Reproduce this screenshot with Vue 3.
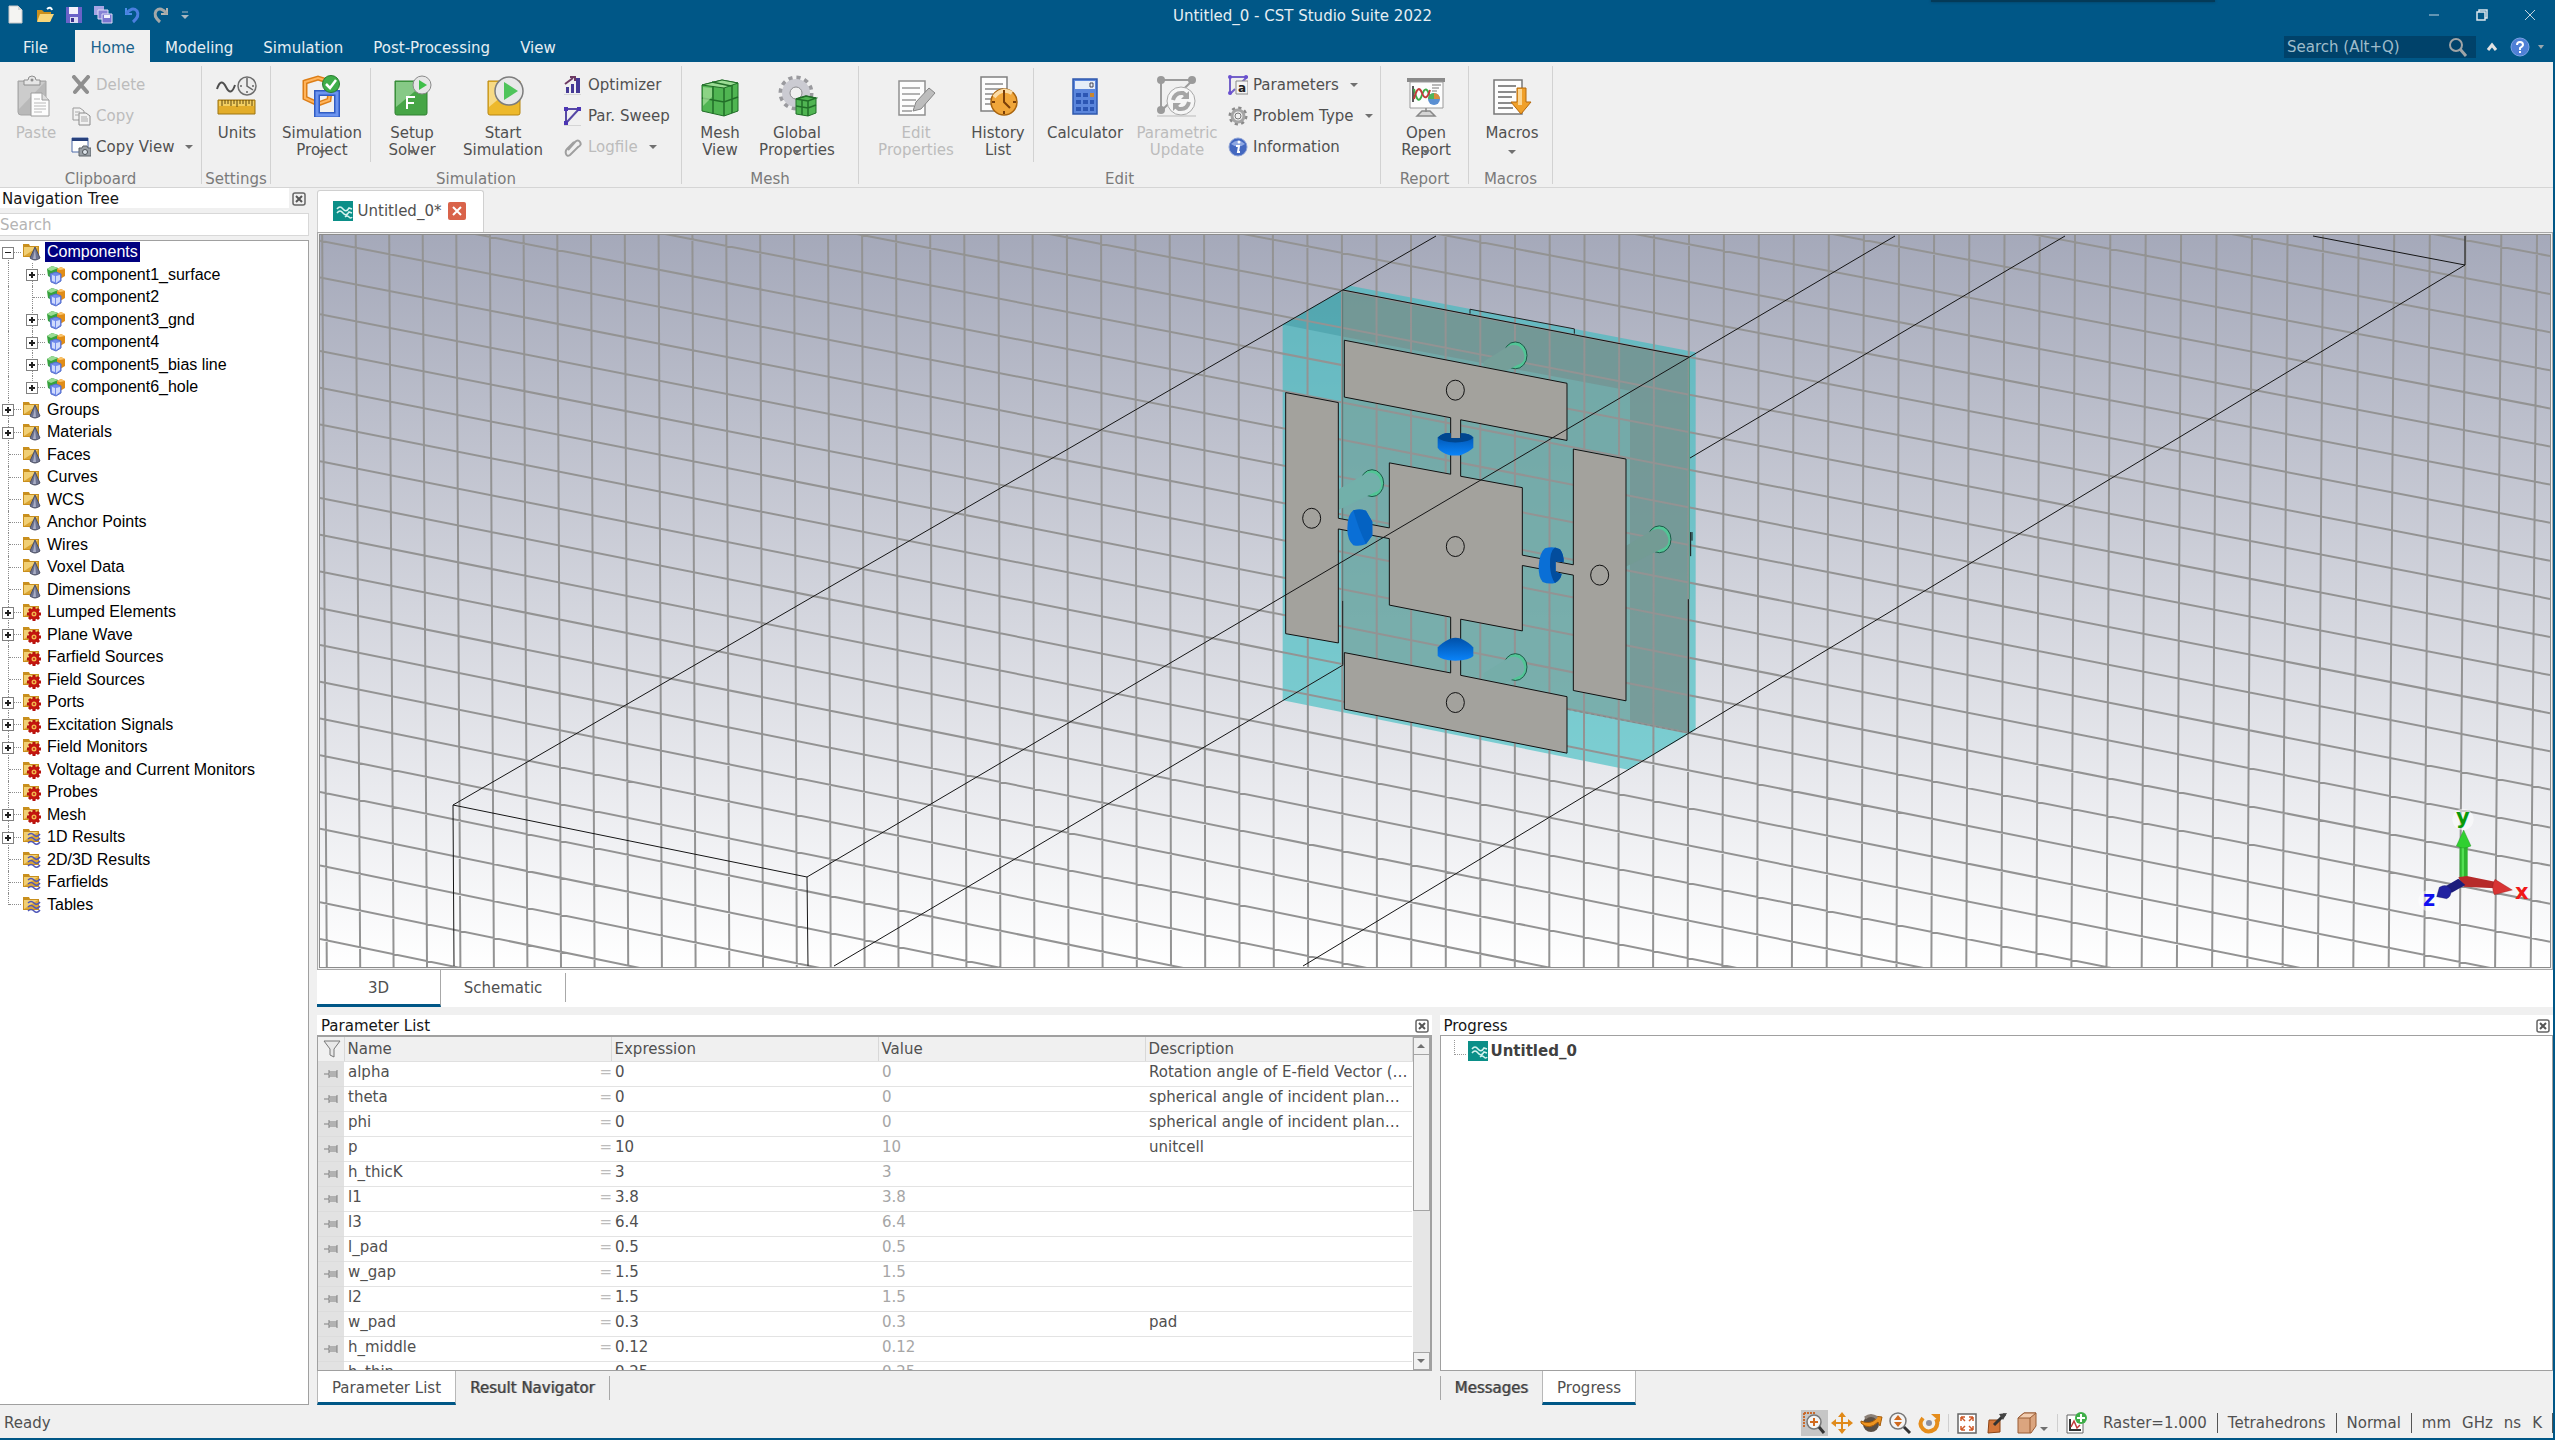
<script setup>
import { ref } from 'vue'

const art = {
  doc: '<path d="M3 1h9l4 4v13H3z" fill="#f4f4f2" stroke="#c9c9c9"/><path d="M12 1v4h4" fill="#d5d5d5"/>',
  open: '<path d="M2 5h5l2 2h7v9H2z" fill="#c98f1d"/><path d="M5 9h14l-4 8H2z" fill="#f7d67a"/><path d="M12 4q4-3 5 1" fill="none" stroke="#fff" stroke-width="2"/>',
  save: '<path d="M2 2h16v16H2z" fill="#6a62c8"/><path d="M5 2h9v7H5z" fill="#f2f2fb"/><path d="M6 12h8v6H6z" fill="#dcdcf4"/><path d="M7 13h3v4H7z" fill="#3c3590"/>',
  saveall: '<path d="M1 1h10v9H1z" fill="#a6a4e4"/><path d="M5 5h10v9H5z" fill="#8783d6" stroke="#dcdcf6"/><path d="M9 9h10v9H9z" fill="#7a75d0" stroke="#dcdcf6"/><path d="M11 10h6v3h-6z" fill="#f2f2fb"/>',
  undo: '<path d="M4 3v6h6" fill="none" stroke="#4b8fe8" stroke-width="2"/><path d="M4 9q6-8 11-3q3 5-4 11" fill="none" stroke="#4b7fe0" stroke-width="3"/>',
  redo: '<path d="M16 3v6h-6" fill="none" stroke="#b4b4ae" stroke-width="2"/><path d="M16 9q-6-8-11-3q-3 5 4 11" fill="none" stroke="#a4a8a8" stroke-width="3"/>',
  paste: '<path d="M3 6h28v31q0 3-3 3H6q-3 0-3-3z" fill="#b9b9b9" stroke="#a5a5a5"/><path d="M4 7h26L4 34z" fill="#cccccc"/><path d="M9 5h4q0-4 4-4t4 4h4v5H9z" fill="#e6e6e6" stroke="#8e8e8e"/><circle cx="17" cy="5" r="1.500" fill="#8e8e8e"/><path d="M16 18h11l7 7v16H16z" fill="#fdfdfd" stroke="#9c9c9c"/><path d="M27 18v7h7" fill="#ddd" stroke="#9c9c9c"/><path d="M19 24h6M19 28h12M19 31h12M19 34h12M19 37h8" stroke="#b9b9b9"/>',
  del: '<path d="M3 2l13 15M17 2L4 17" stroke="#8f8f8f" stroke-width="4" stroke-linecap="round"/>',
  copy: '<path d="M2 2h7l4 3v9H2z" fill="#f2f2f2" stroke="#9a9a9a"/><path d="M8 7h7l4 3v9H8z" fill="#f2f2f2" stroke="#8a8a8a"/><path d="M10 11h6M10 13h7M10 15h7M4 6h5M4 9h4" stroke="#aaa"/>',
  copyview: '<path d="M1 1h16v14H1z" fill="#fff" stroke="#4c6aa8"/><path d="M1 1h16v3H1z" fill="#27407c"/><path d="M8 11h3l1-2h4l1 2h3v8H8z" fill="#9aa0a6" stroke="#5d6268"/><circle cx="14" cy="15" r="2.500" fill="#dfe6ec" stroke="#4d5257"/>',
  units: '<path d="M1 14q4-12 9-2t9-2" fill="none" stroke="#4f4f4f" stroke-width="2"/><circle cx="31" cy="11" r="9" fill="#ececec" stroke="#6e6e6e" stroke-width="1.500"/><path d="M31 3v8l6 4M31 4v2M31 18v-2M24 11h2M38 11h-2" stroke="#666" stroke-width="1.500" fill="none"/><path d="M2 25h37v14H2z" fill="#e3ad2a" stroke="#9c7413"/><path d="M3 26h35v5H3z" fill="#f3cf62"/><path d="M6 25v6M9 25v4M12 25v4M15 25v6M18 25v4M21 25v7M24 25v4M27 25v4M30 25v6M33 25v4M36 25v6" stroke="#5f460b"/>',
  project: '<path d="M4 7L17 3l13 4-2 18-11 4L4 23z" fill="none" stroke="#dd7e17" stroke-width="5"/><path d="M4 7L17 3l13 4-2 18-11 4L4 23z" fill="none" stroke="#ffb45c" stroke-width="2"/><path d="M16 18h20v22H16z" fill="none" stroke="#2f5cc4" stroke-width="6"/><path d="M16 18h20v22H16z" fill="none" stroke="#6c94ef" stroke-width="3"/><circle cx="30" cy="9" r="8.500" fill="#3fae49" stroke="#277c30"/><path d="M25 9l4 4 6-8" fill="none" stroke="#fff" stroke-width="2.500"/>',
  setup: '<path d="M4 6h32v32q0 2-2 2H6q-2 0-2-2z" fill="#46a546" stroke="#2f8030"/><path d="M5 7h30L5 32z" fill="#86c986"/><path d="M16 34V22h8M16 28h7" fill="none" stroke="#fff" stroke-width="2"/><circle cx="31" cy="10" r="9" fill="#e6e6e6" stroke="#8a8a8a"/><path d="M28 5l8 5-8 5z" fill="#3fbf49"/>',
  start: '<path d="M6 6h32v32q0 2-2 2H8q-2 0-2-2z" fill="#edb92c" stroke="#b68510"/><path d="M7 7h30L7 32z" fill="#f7da85"/><circle cx="27" cy="16" r="14" fill="#e8e8e8" stroke="#7d7d7d" stroke-width="1.500"/><path d="M22 7l14 9-14 9z" fill="#4fc45a"/>',
  optimizer: '<path d="M3 12h3v6H3zM8 9h3v9H8zM13 3h4v15h-4z" fill="#453a96"/><path d="M2 9l8-6M7 2h5v4" fill="none" stroke="#6d3a63" stroke-width="2"/><path d="M1 20h17" stroke="#bbb"/>',
  sweep: '<path d="M3 16V3h13L4 16" fill="none" stroke="#5648a5" stroke-width="2"/><path d="M1 1h4v4H1zM14 1h4v4h-4zM1 15h4v4H1z" fill="#4c35b3"/><path d="M1 20h17" stroke="#bbb"/>',
  clip: '<path d="M5 13L12 5q3-3 5 0t-2 5l-8 8q-3 2-4-1t1-5l7-7" fill="none" stroke="#9f9f9f" stroke-width="2"/>',
  mesh: '<path d="M3 10l20-5 16 3v28l-14 5-22-5z" fill="#50b552" stroke="#216e28"/><path d="M3 10l22 3 14-5L23 5z" fill="#9bdc94" stroke="#216e28"/><path d="M25 13v28M14 11v28M33 10v28M3 23l22 4 14-5M13 7l19 4" fill="none" stroke="#216e28" stroke-width="1.500"/><path d="M4 12l9 1v9l-9 9z" fill="#a5e09b" opacity=".7"/>',
  global: '<circle cx="20" cy="18" r="15" fill="none" stroke="#9a9a9e" stroke-width="5" stroke-dasharray="4 3.850"/><circle cx="20" cy="18" r="10" fill="none" stroke="#cbcbd2" stroke-width="8"/><circle cx="20" cy="18" r="6" fill="#f0f0f0" stroke="#8a8a8e"/><path d="M20 24l10-3 10 2v15l-8 3-12-2z" fill="#50b552" stroke="#216e28"/><path d="M20 24l12 2 8-3-10-2zM32 26v15M26 25v15M20 31l12 2 8-3" fill="none" stroke="#216e28" stroke-width="1.500"/>',
  edit: '<path d="M4 6h26v34H4z" fill="#fdfdfd" stroke="#909090" stroke-width="1.500"/><path d="M7 13h18M7 19h18M7 25h14M7 31h12M7 36h10" stroke="#999" stroke-width="1.500"/><path d="M18 36l3-9 13-14 6 5-14 16z" fill="#bdbdbd" stroke="#858585"/>',
  history: '<path d="M4 2h26v34H4z" fill="#fdfdfd" stroke="#808080" stroke-width="1.500"/><path d="M8 9h18M8 14h18M8 19h8M8 24h7M8 29h7" stroke="#8a8a8a" stroke-width="1.500"/><circle cx="27" cy="27" r="13" fill="#f0a63a" stroke="#a9640e" stroke-width="1.500"/><path d="M17 22q8-10 18-4" stroke="#fbdca6" stroke-width="4" fill="none"/><path d="M27 17v10l6 6M27 15v3M27 39v-3M15 27h3M39 27h-3" stroke="#7a3f08" stroke-width="2" fill="none"/>',
  calc: '<path d="M9 4h24v35H9z" fill="#5b86dc" stroke="#2f58ad" stroke-width="1.500"/><path d="M11 6h20v8H11z" fill="#e6edf8"/><path d="M26 8h3v4h-3z" fill="none" stroke="#445"/><path d="M12 18h5v4h-5zM19 18h5v4h-5zM12 25h5v4h-5zM19 25h5v4h-5zM26 25h4v4h-4zM12 32h5v4h-5zM19 32h5v4h-5zM26 32h4v4h-4z" fill="#2c56b4"/><path d="M26 18h4v4h-4z" fill="#c9852c"/>',
  paramupd: '<path d="M5 36V5h32L5 36" fill="none" stroke="#9c9c9c" stroke-width="2"/><circle cx="5" cy="5" r="4" fill="#9a9a9a"/><circle cx="36" cy="5" r="4" fill="#9a9a9a"/><circle cx="5" cy="35" r="4" fill="#9a9a9a"/><circle cx="25" cy="26" r="14" fill="#f6f6f6" stroke="#a8a8a8"/><path d="M17 25q2-8 10-7l4 3M33 27q-2 8-10 7l-4-3" fill="none" stroke="#a5a5a5" stroke-width="4"/><path d="M33 16v8h-8zM17 36v-8h8z" fill="#a5a5a5"/><path d="M1 41h39" stroke="#bbb"/>',
  parameters: '<path d="M2 19V2h17l-6 6M2 19l5-5" fill="none" stroke="#7462c8" stroke-width="2"/><circle cx="2" cy="2" r="2" fill="#6a50d0"/><circle cx="18" cy="2" r="2" fill="#6a50d0"/><circle cx="2" cy="18" r="2" fill="#6a50d0"/><path d="M8 6h12v13H8z" fill="#f4f4f4" stroke="#8a8a8a"/><text x="10" y="17" font-family="DejaVu Sans" font-weight="bold" font-size="12" fill="#222">a</text>',
  gear: '<circle cx="10" cy="10" r="8" fill="none" stroke="#8a8a8a" stroke-width="3" stroke-dasharray="3.100 3.180"/><circle cx="10" cy="10" r="6" fill="none" stroke="#a5a5a5" stroke-width="3"/><circle cx="10" cy="10" r="3" fill="#f0f0f0" stroke="#777"/>',
  info: '<circle cx="10" cy="10" r="9" fill="#4468c0" stroke="#8fa3d6"/><path d="M3 7q7-7 14 0q-7 5-14 0" fill="#8fa8e2"/><circle cx="11" cy="5" r="1.500" fill="#fff"/><path d="M8 9h3l-1 6h2" fill="none" stroke="#fff" stroke-width="2"/>',
  report: '<path d="M2 3h38v4H2z" fill="#8a8a8a"/><path d="M5 7h33v26H5z" fill="#fdfdfd" stroke="#9a9a9a"/><path d="M8 11v16" stroke="#222" stroke-width="1.500"/><path d="M9 14q4 18 8 6t8 2" fill="none" stroke="#3fae49" stroke-width="2"/><path d="M9 24q4-16 8-6t8-3" fill="none" stroke="#c23b3b" stroke-width="2"/><path d="M27 10h9M27 13h7M27 16h5" stroke="#777"/><circle cx="29" cy="24" r="6" fill="#5a8fd2"/><path d="M29 24v-6a6 6 0 0 1 6 6z" fill="#d98c3d"/><path d="M29 24h-6a6 6 0 0 1 6-6z" fill="#4fb35a"/><path d="M21 33v4M12 41l5-5h8l5 5z" fill="#d5d5d5" stroke="#888" stroke-width="1.500"/>',
  macros: '<path d="M3 5h28v34H3z" fill="#fdfdfd" stroke="#777" stroke-width="1.500"/><path d="M7 11h18M7 17h18M7 22h14M7 28h14M7 33h15" stroke="#666" stroke-width="1.500"/><path d="M26 13h9v14h5L30 39 20 27h6z" fill="#f0a02a" stroke="#b4680c"/><path d="M27 14h4v16h-4z" fill="#fbd592"/>',
  folder: '<path d="M1 2h6l1 2h9v11H1z" fill="#c98f1d"/><path d="M2 5h14v9H2z" fill="#f1cf74"/><path d="M2 14l14-9v9z" fill="#dba533"/>',
  cone: '<path d="M13 5l5 11q-5 4-10 0z" fill="#6d7390" stroke="#4b4f63"/><path d="M13 7l1 10h-3z" fill="#a9aec4"/>',
  cog: '<path d="M12 5v14M5 12h14M7 7l10 10M17 7L7 17" stroke="#b3120d" stroke-width="3"/><circle cx="12" cy="12" r="4" fill="#f0b44a" stroke="#c3150f" stroke-width="3"/><circle cx="12" cy="12" r="1" fill="#c3150f"/>',
  wave: '<path d="M6 8q3-3 6 0t6-1M6 12q3-3 6 0t6-1M6 16q3-3 6 0t6-1" fill="none" stroke="#4e56b8" stroke-width="1.500"/>',
  comp: '<path d="M1 4l5-3 6 2v8l-6 2-4-2z" fill="#35a23c"/><path d="M1 4l4 2 7-3-6-2z" fill="#9bdc94"/><path d="M11 4l4-2 4 2v7l-5 3-3-2z" fill="#e08d18"/><path d="M11 4l3 1 5-1-4-2z" fill="#fbc46a"/><path d="M4 9l6-2 5 2v7l-5 3-5-2z" fill="#6f8aec" stroke="#5870cc"/><path d="M6 10l3 1v6l-3-1zM10 11l4-1v5l-4 3z" fill="#cfdafc"/>',
  cst: '<path d="M0 0h20v20H0z" fill="#0b8f88"/><path d="M4 8q3-4 6 0t6-1l3 1M4 12q3-4 6 0t6-1l3 1M12 16q2-2 4 0t3 0" fill="none" stroke="#d5f3ef" stroke-width="1.500"/>',
  zoomsel: '<path d="M2 2h12M2 2v14" stroke="#c96a2c" stroke-width="2" stroke-dasharray="2 1"/><circle cx="12" cy="11" r="7" fill="#f4f4f4" stroke="#777" stroke-width="1.500"/><path d="M12 7v8M8 11h8" stroke="#d0691d" stroke-width="2"/><path d="M17 16l5 6" stroke="#333" stroke-width="3"/>',
  move: '<path d="M12 3v18M3 12h18" stroke="#e08a1a" stroke-width="2"/><path d="M12 1l4 5H8zM12 23l4-5H8zM1 12l5-4v8zM23 12l-5-4v8z" fill="#e08a1a"/>',
  orbit: '<ellipse cx="12" cy="13" rx="8" ry="8" fill="#5b5046"/><path d="M2 12q8 8 17-1l2 4 2-9-8-1 2 3q-6 6-15 2z" fill="#ee9420" stroke="#a75c08"/><path d="M6 7q6-5 12 0" stroke="#8c8178" stroke-width="3" fill="none"/>',
  zoom: '<circle cx="10" cy="10" r="8" fill="#f4f4f4" stroke="#777" stroke-width="1.500"/><path d="M10 4l4 5H6zM10 16l4-5H6z" fill="#d0691d"/><path d="M16 16l6 6" stroke="#333" stroke-width="3"/>',
  rotate: '<path d="M6 7q-5 6 0 11t12 0q4-5 1-10" fill="none" stroke="#e58d1c" stroke-width="4"/><path d="M14 3h9v8z" fill="#e58d1c"/><circle cx="12" cy="12" r="3" fill="#8b8fa0"/>',
  fit: '<path d="M3 3h18v19H3z" fill="#fff" stroke="#666" stroke-width="1.500"/><path d="M6 6h4M6 6v4M6 6l4 4M18 6h-4M18 6v4M18 6l-4 4M6 19h4M6 19v-4M6 19l4-4M18 19h-4M18 19v-4M18 19l-4-4" stroke="#d05a28" stroke-width="1.500"/>',
  cut: '<path d="M5 9h11v12l-12 1z" fill="#d4763a" stroke="#8d4415"/><path d="M10 14L21 3" stroke="#333" stroke-width="3"/><path d="M15 3l8-1-4 7z" fill="#444"/>',
  cube: '<path d="M2 7l6-5h12v13l-5 7H2z" fill="#dba57f" stroke="#9a5c35"/><path d="M2 7h12l6-5H8z" fill="#f2cdb0" stroke="#9a5c35"/><path d="M14 7v15" stroke="#9a5c35"/>',
  addrep: '<path d="M3 4h16v18H3z" fill="#fff" stroke="#666"/><path d="M6 8v11h11" stroke="#333" fill="none" stroke-width="2"/><path d="M7 16l3-6 3 7 3-3" stroke="#c23b3b" fill="none" stroke-width="1.500"/><circle cx="17" cy="7" r="6" fill="#3fae49"/><path d="M17 3v8M13 7h8" stroke="#fff" stroke-width="2"/>'
}

const quick = ['doc', 'open', 'save', 'saveall', 'undo', 'redo']
const menuTabs = ['File', 'Home', 'Modeling', 'Simulation', 'Post-Processing', 'View']
const menuSearch = ref('')
const treeSearch = ref('')

const big = (icon, l1, l2, w, extra = {}) => ({ kind: 'big', icon, l1, l2, w, ...extra })
const small = (w, items) => ({ kind: 'small', w, items })
const sep = { kind: 'sep' }
const gap = w => ({ kind: 'gap', w })
const groups = [
  { name: 'Clipboard', w: 202, parts: [gap(6), big('paste', 'Paste', '', 60, { off: true }), gap(4), small(130, [
    { icon: 'del', t: 'Delete', off: true }, { icon: 'copy', t: 'Copy', off: true }, { icon: 'copyview', t: 'Copy View', drop: true }]) ] },
  { name: 'Settings', w: 69, parts: [gap(5), big('units', 'Units', '', 60)] },
  { name: 'Simulation', w: 411, parts: [gap(6), big('project', 'Simulation', 'Project', 90, { drop: true }), gap(3), sep, gap(3), big('setup', 'Setup', 'Solver', 76, { drop: true }), gap(8), big('start', 'Start', 'Simulation', 90), gap(14), small(116, [
    { icon: 'optimizer', t: 'Optimizer' }, { icon: 'sweep', t: 'Par. Sweep' }, { icon: 'clip', t: 'Logfile', drop: true, off: true }]) ] },
  { name: 'Mesh', w: 177, parts: [gap(7), big('mesh', 'Mesh', 'View', 62), gap(2), big('global', 'Global', 'Properties', 88, { drop: true })] },
  { name: 'Edit', w: 522, parts: [gap(14), big('edit', 'Edit', 'Properties', 86, { off: true }), gap(6), big('history', 'History', 'List', 66), gap(2), sep, gap(6), big('calc', 'Calculator', '', 90), gap(3), big('paramupd', 'Parametric', 'Update', 88, { off: true }), gap(6), small(150, [
    { icon: 'parameters', t: 'Parameters', drop: true }, { icon: 'gear', t: 'Problem Type', drop: true }, { icon: 'info', t: 'Information' }]) ] },
  { name: 'Report', w: 88, parts: [gap(9), big('report', 'Open', 'Report', 72, { drop: true })] },
  { name: 'Macros', w: 84, parts: [gap(7), big('macros', 'Macros', '', 72, { drop: true })] }
]

const node = (t, icon, box = '', child = false) => ({ t, icon, box, child })
const tree = [
  node('Components', 'cone', '−'),
  node('component1_surface', 'comp', '+', true),
  node('component2', 'comp', '', true),
  node('component3_gnd', 'comp', '+', true),
  node('component4', 'comp', '+', true),
  node('component5_bias line', 'comp', '+', true),
  node('component6_hole', 'comp', '+', true),
  node('Groups', 'cone', '+'), node('Materials', 'cone', '+'), node('Faces', 'cone'),
  node('Curves', 'cone'), node('WCS', 'cone'), node('Anchor Points', 'cone'), node('Wires', 'cone'),
  node('Voxel Data', 'cone'), node('Dimensions', 'cone'),
  node('Lumped Elements', 'cog', '+'), node('Plane Wave', 'cog', '+'), node('Farfield Sources', 'cog'),
  node('Field Sources', 'cog'), node('Ports', 'cog', '+'), node('Excitation Signals', 'cog', '+'),
  node('Field Monitors', 'cog', '+'), node('Voltage and Current Monitors', 'cog'), node('Probes', 'cog'),
  node('Mesh', 'cog', '+'), node('1D Results', 'wave', '+'), node('2D/3D Results', 'wave'),
  node('Farfields', 'wave'), node('Tables', 'wave')
]

const params = [
  ['alpha', '0', 'Rotation angle of E-field Vector (…'], ['theta', '0', 'spherical angle of incident plan…'],
  ['phi', '0', 'spherical angle of incident plan…'], ['p', '10', 'unitcell'], ['h_thicK', '3', ''],
  ['l1', '3.8', ''], ['l3', '6.4', ''], ['l_pad', '0.5', ''], ['w_gap', '1.5', ''], ['l2', '1.5', ''],
  ['w_pad', '0.3', 'pad'], ['h_middle', '0.12', ''], ['h_thin', '0.25', '']
]

const statusIcons = ['zoomsel', 'move', 'orbit', 'zoom', 'rotate']

// Working plane grid: two families of lines in mild perspective.
const uprights = []
for (let k = -35; k <= 31; k++) {
  const top = 1480.3 + (34.67 * k) / (1 - 0.000525 * k)
  const drift = (top - 1480) * (k < 0 ? 0.004 : 0.006)
  uprights.push([top, 235, top - drift, 967])
}
const slants = []
for (let i = -13; i <= 20; i++) slants.push([320, 240.7 + 36.75 * i, 2550, 256 + 38.1 * (i + 11)])
const gridPath = [...uprights, ...slants].map(l => `M${l[0].toFixed(1)} ${l[1].toFixed(1)}L${l[2].toFixed(1)} ${l[3].toFixed(1)}`).join('')

// Plated holes behind the front layer: rim centre plus how far the barrel reaches back.
const vias = [
  { x: 826, y: 277, len: 95, fill: '#759f99' },
  { x: 396, y: 648, len: 100, fill: '#72b0aa' },
  { x: 1258, y: 811, len: 98, fill: '#739b94' },
  { x: 826, y: 1182, len: 95, fill: '#75ada9' }
]
const barrel = v => `M${v.x - 20} ${v.y - 27}Q${v.x + 12} ${v.y - 38} ${v.x + 24} ${v.y - 10}T${v.x + 6} ${v.y + 28}L${v.x - v.len} ${v.y + 78}V${v.y + 18}z`
</script>

<template>
  <div class="app">
    <header class="top">
      <div class="titlebar">
        <div class="quick">
          <button v-for="q in quick" :key="q" :aria-label="q"><svg width="20" height="20" viewBox="0 0 20 20" v-html="art[q]" /></button>
          <button class="more" aria-label="Customize"><svg width="8" height="8" viewBox="0 0 8 8"><path d="M1 1h6" stroke="#a9b7c0" /><path d="M0 4h8L4 8z" fill="#a9b7c0" /></svg></button>
        </div>
        <h1>Untitled_0 - CST Studio Suite 2022</h1>
        <div class="winbtns">
          <button aria-label="Minimize"><svg width="12" height="12" viewBox="0 0 12 12"><path d="M1 6h10" stroke="#c3d3de" stroke-width="1" /></svg></button>
          <button aria-label="Restore"><svg width="12" height="12" viewBox="0 0 12 12"><path d="M1 3h8v8H1zM3 3V1h8v8H9" fill="none" stroke="#dbe6ed" stroke-width="1.500" /></svg></button>
          <button aria-label="Close"><svg width="12" height="12" viewBox="0 0 12 12"><path d="M1 1l10 10M11 1L1 11" stroke="#c3d3de" /></svg></button>
        </div>
        <span class="shade"></span>
      </div>
      <div class="menurow">
        <nav>
          <button v-for="m in menuTabs" :key="m" :class="{ on: m === 'Home', file: m === 'File' }">{{ m }}</button>
        </nav>
        <div class="finder">
          <label class="box"><input v-model="menuSearch" aria-label="Search commands" placeholder="Search (Alt+Q)">
            <svg width="20" height="20" viewBox="0 0 20 20"><circle cx="8" cy="8" r="6" fill="none" stroke="#a0a4a6" stroke-width="2" /><path d="M12 12l6 7" stroke="#a0a4a6" stroke-width="3" /></svg></label>
          <button aria-label="Collapse ribbon"><svg width="12" height="12" viewBox="0 0 12 12"><path d="M2 9l4-5 4 5" fill="none" stroke="#e2e2e2" stroke-width="3" /></svg></button>
          <button aria-label="Help"><svg width="20" height="20" viewBox="0 0 20 20"><circle cx="10" cy="10" r="9" fill="#4f80d6" stroke="#7da2e4" /><path d="M7 8q0-3 3-3t3 3q0 1-3 3v2M10 14v2" fill="none" stroke="#fff" stroke-width="2" /></svg></button>
          <button aria-label="Help menu"><svg width="6" height="4" viewBox="0 0 6 4"><path d="M0 0h6L3 4z" fill="#9aa7ae" /></svg></button>
        </div>
      </div>
    </header>

    <section class="ribbon">
      <div v-for="g in groups" :key="g.name" class="group" :style="{ width: g.w + 'px' }">
        <div class="parts">
          <template v-for="(p, i) in g.parts" :key="i">
            <button v-if="p.kind === 'big'" class="big" :class="{ off: p.off }" :style="{ width: p.w + 'px' }">
              <svg width="42" height="42" viewBox="0 0 42 42" v-html="art[p.icon]" />
              <span>{{ p.l1 }}</span><span>{{ p.l2 }}</span>
              <i v-if="p.drop" class="drop"></i>
            </button>
            <div v-else-if="p.kind === 'small'" class="smalls" :style="{ width: p.w + 'px' }">
              <button v-for="s in p.items" :key="s.t" :class="{ off: s.off }">
                <svg width="20" height="20" viewBox="0 0 20 20" v-html="art[s.icon]" />{{ s.t }}<i v-if="s.drop"></i>
              </button>
            </div>
            <span v-else-if="p.kind === 'sep'" class="vsep"></span>
            <span v-else :style="{ width: p.w + 'px' }"></span>
          </template>
        </div>
        <div class="gname">{{ g.name }}</div>
      </div>
    </section>

    <main>
      <aside>
        <div class="dockhead"><h2>Navigation Tree</h2><button class="closebox" aria-label="Close"><svg width="14" height="14" viewBox="0 0 14 14"><rect x="1" y="1" width="12" height="12" rx="2" fill="none" stroke="#666" stroke-width="1.500" /><path d="M4 4l6 6M10 4l-6 6" stroke="#555" stroke-width="2" /></svg></button></div>
        <input v-model="treeSearch" class="treesearch" aria-label="Search tree" placeholder="Search">
        <ul class="tree">
          <li v-for="(n, i) in tree" :key="n.t" :class="{ child: n.child, first: i === 0, last: i === tree.length - 1, lastchild: i === 6 }">
            <span v-if="n.child" class="rail"></span>
            <span class="twig"><b v-if="n.box"><svg width="10" height="10" viewBox="0 0 10 10"><path :d="n.box === '+' ? 'M2 4h6v2H2zM4 2h2v6H4z' : 'M2 4h6v1H2z'" fill="#222" /></svg></b></span>
            <svg width="20" height="20" viewBox="0 0 20 20" v-html="n.icon === 'comp' ? art.comp : art.folder + art[n.icon]" />
            <span class="lbl" :class="{ sel: i === 0 }">{{ n.t }}</span>
          </li>
        </ul>
      </aside>

      <div class="work">
        <div class="doctabs"><button><svg width="20" height="20" viewBox="0 0 20 20" v-html="art.cst" />Untitled_0*<svg width="18" height="18" viewBox="0 0 18 18"><rect width="18" height="18" rx="2" fill="#d9634a" /><path d="M5 5l8 8M13 5l-8 8" stroke="#fff" stroke-width="2" /></svg></button></div>
        <div class="view">
          <svg viewBox="320 235 2230 732" preserveAspectRatio="xMinYMin slice">
            <defs>
              <linearGradient id="sky" x1="0" y1="0" x2="0" y2="1"><stop offset="0" stop-color="#a5a9ba" /><stop offset="1" stop-color="#ffffff" /></linearGradient>
              <linearGradient id="blue" x1="0" y1="0" x2="0" y2="1"><stop offset="0" stop-color="#0050a8" /><stop offset="1" stop-color="#0a84fa" /></linearGradient>
            </defs>
            <rect x="320" y="235" width="2230" height="732" fill="url(#sky)" />
            <g transform="translate(1240 260) scale(.33333 .34439)">
              <path d="M128 187L330 75L1367 268V1365L1165 1480L128 1278z" fill="#35bdc0" fill-opacity=".6" />
              <path d="M128 187L308 87V222z" fill="#3a8f98" fill-opacity=".4" />
              <path d="M308 87L1348 282V1373L308 1175z" fill="#7a9c96" fill-opacity=".6" />
              <path d="M308 87L1348 282V1373L1170 1340V380L308 222z" fill="#76807c" fill-opacity=".4" />
            </g>
            <path :d="gridPath" fill="none" stroke="#939393" stroke-width="2" />
            <g class="lines" transform="translate(1240 260) scale(.33333 .34439)">
              <path d="M308 87V1175" stroke="#5c7774" />
              <path d="M308 990V1175" stroke="#222" />
              <path d="M308 87L1348 282" stroke="#111" />
              <path d="M690 156V143L1003 200V214" stroke="#222" fill="none" />
              <path d="M1348 282V985" stroke="#4fa18b" />
              <path d="M1345 985V1373M1352 790V860M1356 790V815" stroke="#111" />
              <path d="M983 1305L1345 1373" stroke="#7d8a8a" stroke-dasharray="3 3" />
              <g v-for="v in vias" :key="v.y">
                <ellipse :cx="v.x" :cy="v.y" rx="35" ry="39" fill="#52c596" stroke="#1c5a48" />
                <path :d="barrel(v)" :fill="v.fill" />
              </g>
              <g fill="#a3a29d" stroke="#111">
                <path d="M313 233L981 358V524L662 464V628L847 661V857L1000 885V549L1158 578V1280L1000 1250V915L847 887V1077L662 1043V1206L981 1268V1432L313 1304V1140L632 1199V1037L448 1002V809L295 781V1112L137 1085V385L295 414V750L448 778V589L632 622V458L313 398z" />
                <ellipse cx="646" cy="378" rx="27" ry="29" /><ellipse cx="646" cy="832" rx="27" ry="29" /><ellipse cx="646" cy="1285" rx="27" ry="29" />
                <ellipse cx="215" cy="750" rx="27" ry="29" /><ellipse cx="1079" cy="915" rx="27" ry="29" />
              </g>
              <path d="M593 515Q610 500 632 503V517H662V503Q690 503 700 515V545Q690 555 660 568H632Q600 558 593 545z" fill="url(#blue)" />
              <path d="M594 516Q610 500 632 503V517H662V503Q690 503 700 516Q690 528 646 530Q604 528 594 516z" fill="#00468f" />
              <path d="M593 1125Q604 1112 632 1099Q646 1095 662 1099Q690 1112 700 1125V1150Q690 1162 646 1164Q604 1162 593 1150z" fill="url(#blue)" />
              <path d="M322 780Q322 740 340 727Q360 722 378 728L397 760V800L378 825Q360 832 340 828Q322 815 322 780z" fill="#0a6fd6" /><path d="M340 727Q360 722 378 728L397 760V800L378 825Q355 780 340 727z" fill="#0462c2" />
              <path d="M896 890Q898 850 915 837Q940 830 960 840Q972 855 971 878L947 875V905L965 912Q962 930 945 938Q925 942 908 935Q895 920 896 890z" fill="#0a6fd6" /><path d="M930 890Q928 845 945 835L960 840Q972 855 971 878L947 875V905L965 912Q962 930 945 938Q932 920 930 890z" fill="#034d9d" />
            </g>
            <path class="thin" d="M453 805L1436 236M807 877L1895 236M834 966L1343 665M1690 458L2065 236M1303 966L1689 733L2465 265M453 805L807 877M453 805L454 966M807 877L808 966M2313 236L2465 265V236" />
            <g transform="translate(2280 780) scale(.33333)">
              <circle cx="549" cy="118" r="32" fill="#fff" fill-opacity=".5" /><circle cx="447" cy="362" r="32" fill="#fff" fill-opacity=".5" />
              <path d="M539 195h24v100h-24z" fill="#2fb52f" /><path d="M545 195h7v100h-7z" fill="#52e052" /><path d="M551 150L529 198Q551 210 573 198z" fill="#30d030" stroke="#187a18" />
              <path d="M560 288L645 305V325L552 320L535 292z" fill="#b62a2a" /><path d="M645 298L697 330L643 344Q632 320 645 298z" fill="#d83434" stroke="#8a1616" />
              <path d="M535 296L556 315L515 338L498 318z" fill="#1c1c7c" /><path d="M470 350L478 322Q500 308 514 330Q514 350 500 356z" fill="#2222a0" stroke="#14145c" />
            </g>
            <g class="axis"><text x="2456" y="824" fill="#0a9a0a">y</text><text x="2515" y="899" fill="#f01818">x</text><text x="2423" y="906" fill="#1010f0">z</text></g>
          </svg>
        </div>
        <div class="viewtabs"><button class="on">3D</button><button class="other">Schematic</button></div>

        <div class="docks">
          <section class="dock plist">
            <div class="dockhead"><h2>Parameter List</h2><button class="closebox" aria-label="Close"><svg width="14" height="14" viewBox="0 0 14 14"><rect x="1" y="1" width="12" height="12" rx="2" fill="none" stroke="#666" stroke-width="1.500" /><path d="M4 4l6 6M10 4l-6 6" stroke="#555" stroke-width="2" /></svg></button></div>
            <div class="tablebox">
              <div class="clip">
                <table>
                  <colgroup><col class="c0"><col class="c1"><col class="c1"><col class="c1"><col class="c1"></colgroup>
                  <thead><tr><th><svg width="18" height="18" viewBox="0 0 18 18"><path d="M1 1h16l-6 8v8l-4-2V9z" fill="#e8e8e8" stroke="#777" /></svg></th><th>Name</th><th>Expression</th><th>Value</th><th>Description</th></tr></thead>
                  <tbody>
                    <tr v-for="r in params" :key="r[0]">
                      <td class="pin"><svg width="14" height="10" viewBox="0 0 14 10"><path d="M0 5h5M5 1v8M5 3h8M5 7h8M13 1v8M6 5h7" stroke="#808080" fill="none" stroke-width="1" /></svg></td>
                      <td><span class="nm">{{ r[0] }}<em>=</em></span></td><td>{{ r[1] }}</td><td class="val">{{ r[1] }}</td><td>{{ r[2] }}</td>
                    </tr>
                  </tbody>
                </table>
              </div>
              <div class="scroll"><button aria-label="Scroll up"><i class="up"></i></button><span class="thumb"></span><span class="track"></span><button aria-label="Scroll down"><i></i></button></div>
            </div>
            <div class="btabs"><button class="on">Parameter List</button><button class="heavy">Result Navigator</button><span class="bar"></span></div>
          </section>
          <section class="dock prog">
            <div class="dockhead"><h2>Progress</h2><button class="closebox" aria-label="Close"><svg width="14" height="14" viewBox="0 0 14 14"><rect x="1" y="1" width="12" height="12" rx="2" fill="none" stroke="#666" stroke-width="1.500" /><path d="M4 4l6 6M10 4l-6 6" stroke="#555" stroke-width="2" /></svg></button></div>
            <div class="progbox"><div class="job"><span class="elbow"></span><svg width="20" height="20" viewBox="0 0 20 20" v-html="art.cst" /><strong>Untitled_0</strong></div></div>
            <div class="btabs"><span class="bar"></span><button class="heavy">Messages</button><button class="on">Progress</button></div>
          </section>
        </div>
      </div>
    </main>

    <footer>
      <span>Ready</span>
      <div class="sicons">
        <button v-for="s in statusIcons" :key="s" :class="{ pressed: s === 'zoomsel' }" :aria-label="s"><svg width="24" height="24" viewBox="0 0 24 24" v-html="art[s]" /></button>
        <span class="ssep"></span>
        <button aria-label="fit"><svg width="24" height="24" viewBox="0 0 24 24" v-html="art.fit" /></button>
        <button aria-label="cut"><svg width="24" height="24" viewBox="0 0 24 24" v-html="art.cut" /></button>
        <button class="cubebtn" aria-label="cube"><svg width="24" height="24" viewBox="0 0 24 24" v-html="art.cube" /><i></i></button>
        <span class="ssep"></span>
        <button aria-label="report"><svg width="24" height="24" viewBox="0 0 24 24" v-html="art.addrep" /></button>
      </div>
      <div class="info"><span>Raster=1.000</span><span>Tetrahedrons</span><span>Normal</span><span class="us"><b>mm</b><b>GHz</b><b>ns</b><b>K</b></span></div>
    </footer>
  </div>
</template>

<style>
body { margin: 0; }
</style>

<style scoped>
* { box-sizing: border-box; }
.app { height: 100vh; display: flex; flex-direction: column; font: 15px/18px "DejaVu Sans", sans-serif; color: #505050; background: #f0f0f0; border-right: 2px solid #005787; border-bottom: 2px solid #005787; overflow: hidden; }
button { font: inherit; color: inherit; background: none; border: 0; padding: 0; margin: 0; display: flex; align-items: center; justify-content: center; }
input { font: inherit; border: 0; padding: 0; margin: 0; outline: 0; min-width: 0; }
svg { display: block; flex: none; }
h1, h2 { font: inherit; margin: 0; }
i { font-style: normal; }

.top { background: #005787; color: #e6eef3; height: 62px; flex: none; margin-right: -2px; }
.titlebar { height: 30px; display: flex; align-items: center; justify-content: space-between; position: relative; }
.quick { display: flex; gap: 9px; padding-left: 6px; width: 400px; }
.quick .more { margin-left: 1px; }
.winbtns { display: flex; gap: 36px; padding-right: 19px; width: 400px; justify-content: flex-end; }
.titlebar h1 { padding-top: 1px; margin-left: 50px; }
.shade { position: absolute; top: 0; right: 340px; width: 284px; height: 2px; background: #043a58; box-shadow: 0 0 3px #043a58; }
.menurow { height: 32px; display: flex; justify-content: space-between; }
nav { display: flex; padding-left: 8px; }
nav button { padding: 3px 15px 0; }
nav .file { margin-right: 12px; }
nav .on { background: #f0f0f0; color: #19628c; width: 75px; }
.finder { display: flex; align-items: center; padding: 1px 11px 0 0; height: 32px; }
.finder .box { display: flex; align-items: center; width: 192px; height: 22px; background: #00426a; padding: 0 8px 0 3px; margin-right: 10px; }
.finder input { background: none; flex: 1; color: #9fbccb; width: 100px; }
.finder input::placeholder { color: #9fbccb; opacity: 1; }
.finder button + button { margin-left: 12px; }
.finder button:last-child { margin-left: 8px; }

.ribbon { height: 126px; flex: none; display: flex; border-bottom: 1px solid #d5d5d5; padding-top: 4px; }
.group { flex: none; display: flex; flex-direction: column; border-right: 1px solid #d2d2d2; margin-bottom: 3px; }
.parts { display: flex; height: 102px; }
.parts > * { flex: none; }
.gname { text-align: center; color: #7a7a7a; line-height: 18px; padding-top: 2px; height: 16px; }
.big { flex-direction: column; justify-content: flex-start; padding-top: 9px; position: relative; }
.big svg { margin-bottom: 8px; }
.big span { height: 17px; line-height: 17px; white-space: nowrap; }
.off { color: #bcbcbc; }
.drop { position: absolute; left: 50%; top: 84px; margin-left: -4px; }
i.drop, .smalls i, .cubebtn i, .scroll i { border: 4px solid transparent; border-top-color: #707070; border-bottom: 0; width: 0; height: 0; }
.vsep { width: 1px; height: 94px; margin-top: 2px; background: #d2d2d2; }
.smalls { display: flex; flex-direction: column; padding-top: 3px; }
.smalls button { height: 31px; justify-content: flex-start; gap: 5px; padding-left: 1px; white-space: nowrap; }
.smalls i { margin-left: 6px; }

main { flex: 1; display: flex; min-height: 0; }
aside { width: 309px; flex: none; display: flex; flex-direction: column; margin-right: 8px; }
.dockhead { display: flex; align-items: center; background: #fff; color: #151515; height: 20px; flex: none; }
.dockhead h2 { flex: 1; padding: 2px 0 0 4px; }
.dockhead .closebox { width: 20px; height: 20px; padding-top: 1px; }
aside .dockhead h2 { padding-left: 2px; }
aside .dockhead .closebox { background: #f0f0f0; }
.treesearch { height: 23px; margin-top: 5px; border: 1px solid #d8d8d8; border-left: 0; background: #fff; }
.treesearch::placeholder { color: #b4b4b4; opacity: 1; }
.tree { flex: 1; margin: 4px 0 0; padding: 0; list-style: none; background: #fff; border: 1px solid #a0a0a0; border-left: 0; font: 16px/20px "Liberation Sans", sans-serif; color: #000; min-height: 0; overflow: hidden; }
.tree li { display: flex; align-items: center; height: 22px; white-space: nowrap; }
.tree li:nth-child(even) { height: 23px; }
.rail { width: 24px; align-self: stretch; position: relative; flex: none; }
.twig { width: 22px; align-self: stretch; position: relative; flex: none; }
.rail::before, .twig::before { content: ""; position: absolute; left: 8px; top: 0; bottom: 0; border-left: 1px dotted #8c8c8c; }
.twig::after { content: ""; position: absolute; left: 9px; right: 1px; top: 11px; border-top: 1px dotted #8c8c8c; }
.first .twig::before { top: 11px; }
.last .twig::before, .lastchild .twig::before { bottom: 11px; }
.twig b { position: absolute; left: 2px; top: 6px; width: 12px; height: 12px; background: #fff; border: 1px solid #808080; z-index: 1; display: flex; align-items: center; justify-content: center; }
.lbl { margin-left: 3px; padding: 0 2px; }
.sel { background: #000080; color: #fff; }

.work { flex: 1; min-width: 0; display: flex; flex-direction: column; }
.doctabs { height: 44px; flex: none; padding-top: 2px; display: flex; }
.doctabs button { width: 167px; background: #fff; border: 1px solid #d0d0d0; border-bottom: 0; border-radius: 3px 3px 0 0; gap: 5px; color: #505050; padding: 0 2px 2px 0; }
.doctabs button svg:last-child { margin-left: 2px; }
.view { flex: 1; min-height: 0; border: 1px solid #a8a8a8; outline: 1px solid #f0f0f0; outline-offset: -2px; padding: 2px; background: #8c8c8c; }
.view svg { width: 100%; height: 100%; }
.lines path, .lines ellipse, .thin { vector-effect: non-scaling-stroke; stroke-width: 1px; }
.thin { fill: none; stroke: #151515; }
.axis { font: bold 21px "DejaVu Sans", sans-serif; }
.viewtabs { height: 37px; flex: none; display: flex; background: #fff; align-items: flex-start; }
.viewtabs .on { width: 124px; height: 37px; padding-top: 1px; border-right: 1px solid #a8a8a8; border-bottom: 3px solid #005787; }
.viewtabs .other { width: 125px; height: 29px; margin-top: 3px; border-right: 1px solid #a8a8a8; }
.docks { height: 398px; flex: none; display: flex; gap: 8px; padding-top: 8px; }
.dock { min-width: 0; display: flex; flex-direction: column; }
.plist { flex: 1114; }
.prog { flex: 1113; }
.tablebox { flex: 1; min-height: 0; display: flex; border: 1px solid #a0a0a0; border-top-width: 2px; border-right-width: 2px; background: #fff; }
.clip { flex: 1; overflow: hidden; min-width: 0; }
table { border-collapse: collapse; table-layout: fixed; width: 100%; }
.c0 { width: 26px; }
th { font-weight: normal; text-align: left; height: 24px; padding: 0 0 0 3px; background: #f0f0f0; border-right: 1px solid #d8d8d8; border-bottom: 1px solid #e0e0e0; }
th:first-child { padding-left: 5px; }
td { height: 25px; padding: 0 0 4px 4px; border-bottom: 1px solid #e3e3e3; white-space: nowrap; overflow: hidden; }
td.pin { background: #e2e2e2; padding: 0 0 0 6px; border-bottom-color: #dcdcdc; }
td.val { color: #a6a6a6; }
.nm { display: flex; justify-content: space-between; }
.nm em { font-style: normal; color: #bcbcbc; margin-right: -1px; }
.scroll { width: 17px; flex: none; display: flex; flex-direction: column; background: #e6e6e6; }
.scroll button, .thumb { border: 1px solid #a4a4a4; background: #f0f0f0; }
.scroll button { height: 18px; }
.scroll .up { transform: rotate(180deg); }
.thumb { height: 157px; margin-top: -1px; }
.track { flex: 1; }
.btabs { height: 34px; flex: none; display: flex; align-items: flex-start; }
.btabs .on { height: 34px; background: #fff; padding: 2px 14px 0; border: 1px solid #b8b8b8; border-top: 0; border-bottom: 3px solid #005787; }
.btabs .heavy { height: 32px; padding: 1px 14px 0; text-shadow: 1px 0 0 #909090; color: #404040; }
.bar { width: 1px; height: 24px; margin-top: 5px; background: #a8a8a8; }
.progbox { flex: 1; background: #fff; border: 1px solid #a0a0a0; min-height: 0; }
.job { display: flex; align-items: center; padding: 5px 0 0 13px; }
.elbow { width: 12px; height: 15px; border-left: 1px dotted #999; border-bottom: 1px dotted #999; margin: -8px 2px 0 0; }
.job strong { margin-left: 3px; color: #404040; }

footer { height: 33px; flex: none; display: flex; align-items: center; padding: 3px 0 0 4px; }
footer > span { flex: 1; }
.sicons { display: flex; align-items: center; margin-right: 2px; }
.sicons button { width: 29px; height: 26px; }
.sicons .pressed { background: #c6c6c6; width: 27px; }
.ssep { width: 1px; height: 18px; background: #cfcfcf; margin: 0 4px; }
.sicons .cubebtn { width: 42px; }
.cubebtn i { margin-top: 12px; }
.info { display: flex; }
.info > span { border-right: 1px solid #555; padding: 0 10px; height: 20px; line-height: 20px; }
.info .us { display: flex; gap: 11px; }
.info .us b { font-weight: normal; }
</style>
